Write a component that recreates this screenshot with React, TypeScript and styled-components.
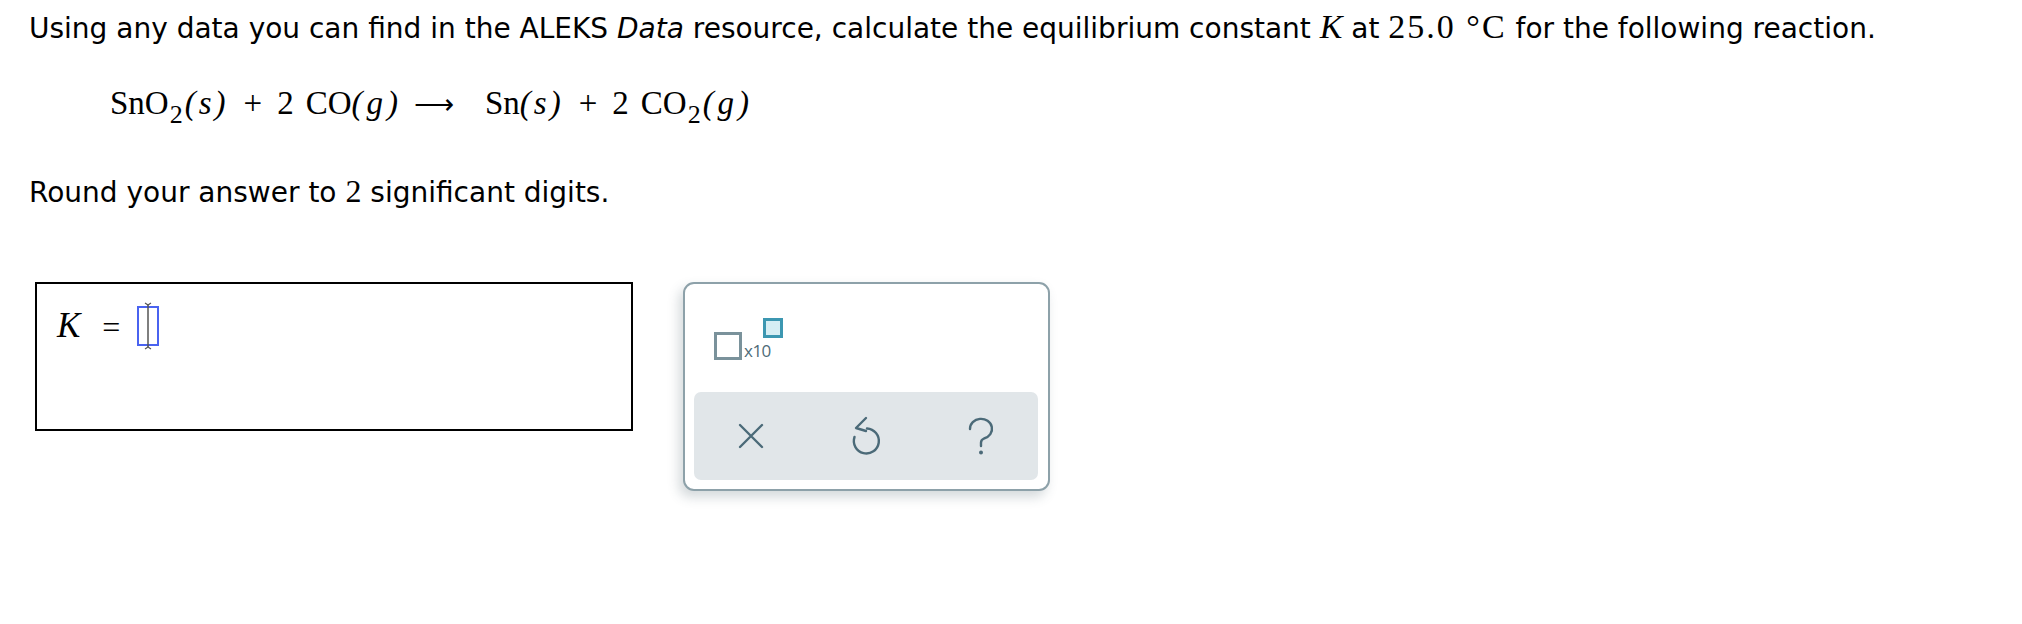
import React from 'react';
import styled, { createGlobalStyle } from 'styled-components';

const GlobalStyle = createGlobalStyle`
    body {
        margin: 0;
        background: #ffffff;
        font-family: "DejaVu Sans", Verdana, sans-serif;
        color: #000;
    }
`;

const Page = styled.div`
    padding-left: 29px;
    width: 2022px;
    height: 624px;
    box-sizing: border-box;
`;

const Prompt = styled.div`
    font-size: 28px;
    line-height: 54px;
    height: 54px;
    white-space: nowrap;
`;

const Math = styled.span<{ $italic?: boolean; $size?: number; $spacing?: number }>`
    font-family: "Liberation Serif", "Times New Roman", serif;
    font-size: ${p => p.$size ?? 32}px;
    font-style: ${p => (p.$italic ? 'italic' : 'normal')};
    letter-spacing: ${p => p.$spacing ?? 0}px;
`;

const Equation = styled.div`
    margin-top: 24px;
    padding-left: 81px;
    height: 50px;
    line-height: 50px;
    font-family: "Liberation Serif", "Times New Roman", serif;
    font-size: 33px;
    white-space: nowrap;
`;

const Sub = styled.sub`
    font-size: 26px;
    vertical-align: -9px;
    line-height: 0;
    margin: 0 2px 0 1px;
`;

const It = styled.i<{ $spacing?: number }>`
    font-style: italic;
    letter-spacing: ${p => p.$spacing ?? 3}px;
`;

const Op = styled.span<{ $left: number; $right: number }>`
    display: inline-block;
    margin: 0 ${p => p.$right}px 0 ${p => p.$left}px;
`;

const Coef = styled.span`
    display: inline-block;
    margin-right: 12px;
`;

const Arrow = styled.span`
    display: inline-block;
    font-size: 28px;
    margin: 0 31px 0 12px;
`;

const Round = styled.div`
    margin-top: 43px;
    height: 40px;
    line-height: 40px;
    font-size: 28px;
`;

const AnswerRow = styled.div`
    margin-top: 71px;
    padding-left: 6px;
    display: flex;
    align-items: flex-start;
    gap: 50px;
`;

const AnswerBox = styled.div`
    width: 598px;
    height: 149px;
    box-sizing: border-box;
    border: 2px solid #000;
    padding: 20px 0 0 20px;
    display: flex;
    align-items: flex-start;
`;

const Expr = styled.div`
    display: flex;
    align-items: center;
    height: 44px;
    font-family: "Liberation Serif", "Times New Roman", serif;
`;

const Equals = styled.span`
    margin: 2px 16px 0 22px;
    font-size: 32px;
`;

const Palette = styled.div`
    width: 367px;
    height: 209px;
    box-sizing: border-box;
    border: 2px solid #8da1a9;
    border-radius: 11px;
    background: #fff;
    box-shadow: -4px 6px 12px rgba(60, 80, 90, 0.22);
    padding: 0 10px 9px 9px;
    display: flex;
    flex-direction: column;
`;

const TemplateArea = styled.div`
    flex: 1;
    display: flex;
    align-items: flex-start;
    padding: 34px 0 0 20px;
`;

const SciTemplate = styled.div`
    display: flex;
    align-items: flex-end;
    height: 42px;
`;

const BigSlot = styled.div`
    width: 28px;
    height: 28px;
    box-sizing: border-box;
    border: 3px solid #7a929b;
`;

const Times10 = styled.span`
    font-family: "Open Sans", "Liberation Sans", sans-serif;
    font-size: 17px;
    line-height: 17px;
    color: #4e6b77;
    margin: 0 0 1px 2px;
    letter-spacing: -0.5px;
`;

const SupSlot = styled.div`
    width: 20px;
    height: 20px;
    box-sizing: border-box;
    border: 3px solid #3c97b1;
    background: #d6eef4;
    align-self: flex-start;
    margin-left: -8px;
`;

const Toolbar = styled.div`
    height: 88px;
    background: #e1e6e9;
    border-radius: 7px;
    display: flex;
`;

const ToolButton = styled.button`
    flex: 1;
    border: none;
    background: transparent;
    display: flex;
    align-items: center;
    justify-content: center;
    padding: 0;
    color: #4b6a78;
`;

function Cursor() {
    return (
        <svg width="24" height="48" viewBox="0 0 24 48">
            <rect x="2" y="5" width="20" height="38" fill="none" stroke="#4a63f0" strokeWidth="2" />
            <line x1="12" y1="3" x2="12" y2="45" stroke="#555" strokeWidth="1.5" />
            <path d="M9 1l3 2 3-2M9 47l3-2 3 2" fill="none" stroke="#555" strokeWidth="1.2" />
        </svg>
    );
}

function ClearIcon() {
    return (
        <svg width="26" height="26" viewBox="0 0 26 26">
            <path d="M2 2L24 24M24 2L2 24" stroke="currentColor" strokeWidth="2.4" strokeLinecap="round" />
        </svg>
    );
}

function UndoIcon() {
    return (
        <svg width="30" height="40" viewBox="0 0 30 40">
            <path d="M15 2L5 12 15 15" fill="none" stroke="currentColor" strokeWidth="2.4" strokeLinecap="round" strokeLinejoin="round" />
            <path d="M3.5 21A12.5 12.5 0 1 0 16 12.5" fill="none" stroke="currentColor" strokeWidth="2.4" strokeLinecap="round" />
        </svg>
    );
}

function HelpIcon() {
    return (
        <svg width="28" height="40" viewBox="0 0 28 40">
            <path d="M3 13a11 10 0 1 1 14 9.5c-2 .8-3 2.2-3 4.2V30" fill="none" stroke="currentColor" strokeWidth="2.4" strokeLinecap="round" />
            <circle cx="14" cy="36.5" r="2" fill="currentColor" />
        </svg>
    );
}

export default function App() {
    return (
        <>
            <GlobalStyle />
            <Page>
                <Prompt>
                    Using any data you can find in the ALEKS <i>Data</i> resource, calculate the equilibrium constant{' '}
                    <Math $italic $size={34}>K</Math> at <Math $size={34} $spacing={2}>25.0 °C</Math> for the following reaction.
                </Prompt>
                <Equation>
                    SnO<Sub>2</Sub><It>(s)</It>
                    <Op $left={15} $right={15}>+</Op>
                    <Coef>2</Coef>CO<It $spacing={4}>(g)</It>
                    <Arrow>⟶</Arrow>
                    Sn<It>(s)</It>
                    <Op $left={15} $right={15}>+</Op>
                    <Coef>2</Coef>CO<Sub>2</Sub><It $spacing={4}>(g)</It>
                </Equation>
                <Round>
                    Round your answer to <Math>2</Math> significant digits.
                </Round>
                <AnswerRow>
                    <AnswerBox>
                        <Expr>
                            <Math $italic $size={35}>K</Math>
                            <Equals>=</Equals>
                            <Cursor />
                        </Expr>
                    </AnswerBox>
                    <Palette>
                        <TemplateArea>
                            <SciTemplate>
                                <BigSlot />
                                <Times10>x10</Times10>
                                <SupSlot />
                            </SciTemplate>
                        </TemplateArea>
                        <Toolbar>
                            <ToolButton aria-label="clear"><ClearIcon /></ToolButton>
                            <ToolButton aria-label="undo"><UndoIcon /></ToolButton>
                            <ToolButton aria-label="help"><HelpIcon /></ToolButton>
                        </Toolbar>
                    </Palette>
                </AnswerRow>
            </Page>
        </>
    );
}
